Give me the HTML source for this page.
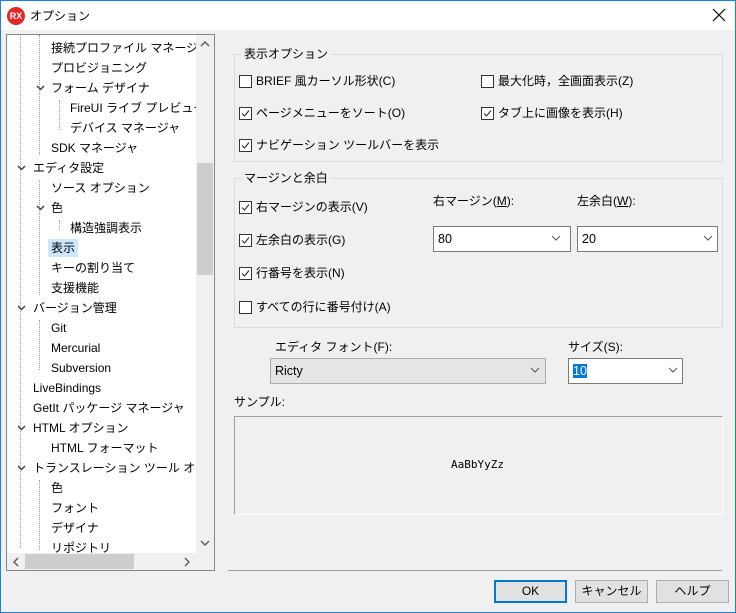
<!DOCTYPE html>
<html><head><meta charset="utf-8"><style>
*{margin:0;padding:0;box-sizing:border-box}
body{width:736px;height:613px;overflow:hidden;background:#f0f0f0;font-family:"Liberation Sans","Noto Sans CJK JP",sans-serif;font-size:12px;color:#000;position:relative}
.a{position:absolute;white-space:nowrap;line-height:16px}
.win{position:absolute;left:0;top:0;width:736px;height:613px;border:1px solid #1883d7}
.title{position:absolute;left:1px;top:1px;width:734px;height:29px;background:#fff}
.tree{position:absolute;left:6px;top:34px;width:209px;height:537px;border:1px solid #828790;background:#fff;overflow:hidden}
.vs{position:absolute;left:189px;top:0;width:18px;height:518px;background:#f0f0f0}
.hs{position:absolute;left:0;top:518px;width:207px;height:17px;background:#f0f0f0}
.cb{position:absolute;width:13px;height:13px;border:1px solid #333;background:#fff}
.grp{position:absolute;border:1px solid #dcdcdc}
.gl{position:absolute;background:#f0f0f0;padding:0 3px;line-height:16px}
.combo{position:absolute;height:26px;border:1px solid #7a7a7a;background:#fff;padding-left:4px;line-height:24px;font-size:12.5px}
.btn{position:absolute;top:580px;width:73px;height:23px;border:1px solid #adadad;background:#e1e1e1;text-align:center;line-height:21px}
.dv{position:absolute;border-left:1px dotted #999;width:0}
.ar{position:absolute}
</style></head><body>
<div class="win"></div>
<div class="title"></div>
<div class="a" style="left:7px;top:7px;width:18px;height:18px;border-radius:9px;background:#e2262a;color:#fff;font-size:9px;font-weight:bold;text-align:center;line-height:18px">RX</div>
<div class="a" style="left:30px;top:8px">オプション</div>
<svg class="a" style="left:712px;top:8px" width="14" height="14"><path d="M1 1L13 13M13 1L1 13" stroke="#000" stroke-width="1.2"/></svg>

<div class="tree">
<div class="dv" style="left:13px;top:0;height:513px"></div>
<div class="dv" style="left:32px;top:0;height:120px"></div>
<div class="dv" style="left:32px;top:145px;height:115px"></div>
<div class="dv" style="left:32px;top:285px;height:50px"></div>
<div class="dv" style="left:32px;top:445px;height:70px"></div>
<div class="dv" style="left:52px;top:65px;height:30px"></div>
<div class="dv" style="left:52px;top:185px;height:10px"></div>
<div class="a" style="left:44px;top:5px">接続プロファイル マネージャ</div>
<div class="a" style="left:44px;top:25px">プロビジョニング</div>
<svg class="ar" style="left:29px;top:50px" width="9" height="6"><path d="M1 1L4.5 4.5L8 1" stroke="#444" fill="none" stroke-width="1.5"/></svg>
<div class="a" style="left:44px;top:45px">フォーム デザイナ</div>
<div class="a" style="left:63px;top:65px">FireUI ライブ プレビュー</div>
<div class="a" style="left:63px;top:85px">デバイス マネージャ</div>
<div class="a" style="left:44px;top:105px">SDK マネージャ</div>
<svg class="ar" style="left:10px;top:130px" width="9" height="6"><path d="M1 1L4.5 4.5L8 1" stroke="#444" fill="none" stroke-width="1.5"/></svg>
<div class="a" style="left:26px;top:125px">エディタ設定</div>
<div class="a" style="left:44px;top:145px">ソース オプション</div>
<svg class="ar" style="left:29px;top:170px" width="9" height="6"><path d="M1 1L4.5 4.5L8 1" stroke="#444" fill="none" stroke-width="1.5"/></svg>
<div class="a" style="left:44px;top:165px">色</div>
<div class="a" style="left:63px;top:185px">構造強調表示</div>
<div class="a" style="left:41px;top:204px;width:30px;height:18px;background:#cce8ff"></div>
<div class="a" style="left:44px;top:205px">表示</div>
<div class="a" style="left:44px;top:225px">キーの割り当て</div>
<div class="a" style="left:44px;top:245px">支援機能</div>
<svg class="ar" style="left:10px;top:270px" width="9" height="6"><path d="M1 1L4.5 4.5L8 1" stroke="#444" fill="none" stroke-width="1.5"/></svg>
<div class="a" style="left:26px;top:265px">バージョン管理</div>
<div class="a" style="left:44px;top:285px">Git</div>
<div class="a" style="left:44px;top:305px">Mercurial</div>
<div class="a" style="left:44px;top:325px">Subversion</div>
<div class="a" style="left:26px;top:345px">LiveBindings</div>
<div class="a" style="left:26px;top:365px">GetIt パッケージ マネージャ</div>
<svg class="ar" style="left:10px;top:390px" width="9" height="6"><path d="M1 1L4.5 4.5L8 1" stroke="#444" fill="none" stroke-width="1.5"/></svg>
<div class="a" style="left:26px;top:385px">HTML オプション</div>
<div class="a" style="left:44px;top:405px">HTML フォーマット</div>
<svg class="ar" style="left:10px;top:430px" width="9" height="6"><path d="M1 1L4.5 4.5L8 1" stroke="#444" fill="none" stroke-width="1.5"/></svg>
<div class="a" style="left:26px;top:425px">トランスレーション ツール オプション</div>
<div class="a" style="left:44px;top:445px">色</div>
<div class="a" style="left:44px;top:465px">フォント</div>
<div class="a" style="left:44px;top:485px">デザイナ</div>
<div class="a" style="left:44px;top:505px">リポジトリ</div>
<div class="vs"><div style="position:absolute;left:1px;top:128px;width:16px;height:112px;background:#cdcdcd"></div>
<svg style="position:absolute;left:4px;top:6px" width="10" height="6"><path d="M1 5L5 1L9 5" stroke="#606060" fill="none" stroke-width="1.5"/></svg>
<svg style="position:absolute;left:4px;top:505px" width="10" height="6"><path d="M1 1L5 5L9 1" stroke="#606060" fill="none" stroke-width="1.5"/></svg></div>
<div class="hs"><div style="position:absolute;left:18px;top:1px;width:109px;height:15px;background:#cdcdcd"></div>
<svg style="position:absolute;left:6px;top:4px" width="6" height="10"><path d="M5 1L1 5L5 9" stroke="#606060" fill="none" stroke-width="1.5"/></svg>
<svg style="position:absolute;left:177px;top:4px" width="6" height="10"><path d="M1 1L5 5L1 9" stroke="#606060" fill="none" stroke-width="1.5"/></svg></div>
</div>

<div class="grp" style="left:234px;top:54px;width:489px;height:108px"></div>
<div class="gl" style="left:241px;top:46px">表示オプション</div>
<div class="cb" style="left:239px;top:75px"></div><div class="a" style="left:256px;top:73px">BRIEF 風カーソル形状(C)</div>
<div class="cb" style="left:481px;top:75px"></div><div class="a" style="left:498px;top:73px">最大化時，全画面表示(Z)</div>
<div class="cb" style="left:239px;top:107px"></div><div class="a" style="left:256px;top:105px">ページメニューをソート(O)</div>
<div class="cb" style="left:481px;top:107px"></div><div class="a" style="left:498px;top:105px">タブ上に画像を表示(H)</div>
<div class="cb" style="left:239px;top:139px"></div><div class="a" style="left:256px;top:137px">ナビゲーション ツールバーを表示</div>

<div class="grp" style="left:234px;top:178px;width:489px;height:150px"></div>
<div class="gl" style="left:241px;top:170px">マージンと余白</div>
<div class="cb" style="left:239px;top:201px"></div><div class="a" style="left:256px;top:199px">右マージンの表示(V)</div>
<div class="cb" style="left:239px;top:234px"></div><div class="a" style="left:256px;top:232px">左余白の表示(G)</div>
<div class="cb" style="left:239px;top:267px"></div><div class="a" style="left:256px;top:265px">行番号を表示(N)</div>
<div class="cb" style="left:239px;top:301px"></div><div class="a" style="left:256px;top:299px">すべての行に番号付け(A)</div>
<div class="a" style="left:433px;top:193px">右マージン(<u>M</u>):</div>
<div class="a" style="left:577px;top:193px">左余白(<u>W</u>):</div>
<div class="combo" style="left:433px;top:226px;width:138px">80</div>
<div class="combo" style="left:577px;top:226px;width:141px">20</div>

<div class="a" style="left:275px;top:339px">エディタ フォント(F):</div>
<div class="combo" style="left:270px;top:358px;width:276px;background:#e5e5e5;border-color:#adadad">Ricty</div>
<div class="a" style="left:568px;top:339px">サイズ(S):</div>
<div class="combo" style="left:568px;top:358px;width:115px"><span style="background:#0078d7;color:#fff">10</span></div>
<div class="a" style="left:234px;top:394px">サンプル:</div>
<div class="a" style="left:234px;top:416px;width:489px;height:99px;border:1px solid #a0a0a0;border-right-color:#fff;border-bottom-color:#fff"></div>
<div class="a" style="left:451px;top:457px;font-family:'DejaVu Sans Mono',monospace;font-size:11px">AaBbYyZz</div>

<svg class="a" style="left:551px;top:235px" width="10" height="6"><path d="M1 1L5 5L9 1" stroke="#555" fill="none"/></svg>
<svg class="a" style="left:703px;top:235px" width="10" height="6"><path d="M1 1L5 5L9 1" stroke="#555" fill="none"/></svg>
<svg class="a" style="left:530px;top:367px" width="10" height="6"><path d="M1 1L5 5L9 1" stroke="#555" fill="none"/></svg>
<svg class="a" style="left:668px;top:367px" width="10" height="6"><path d="M1 1L5 5L9 1" stroke="#555" fill="none"/></svg>
<svg class="a" style="left:239px;top:107px" width="13" height="13"><path d="M3 6.5L5.5 9L10 3.5" stroke="#222" fill="none"/></svg>
<svg class="a" style="left:481px;top:107px" width="13" height="13"><path d="M3 6.5L5.5 9L10 3.5" stroke="#222" fill="none"/></svg>
<svg class="a" style="left:239px;top:139px" width="13" height="13"><path d="M3 6.5L5.5 9L10 3.5" stroke="#222" fill="none"/></svg>
<svg class="a" style="left:239px;top:201px" width="13" height="13"><path d="M3 6.5L5.5 9L10 3.5" stroke="#222" fill="none"/></svg>
<svg class="a" style="left:239px;top:234px" width="13" height="13"><path d="M3 6.5L5.5 9L10 3.5" stroke="#222" fill="none"/></svg>
<svg class="a" style="left:239px;top:267px" width="13" height="13"><path d="M3 6.5L5.5 9L10 3.5" stroke="#222" fill="none"/></svg>

<div class="a" style="left:228px;top:570px;width:494px;height:1px;background:#a0a0a0"></div>
<div class="btn" style="left:494px;border:2px solid #0078d7;line-height:19px">OK</div>
<div class="btn" style="left:575px">キャンセル</div>
<div class="btn" style="left:656px">ヘルプ</div>
</body></html>
